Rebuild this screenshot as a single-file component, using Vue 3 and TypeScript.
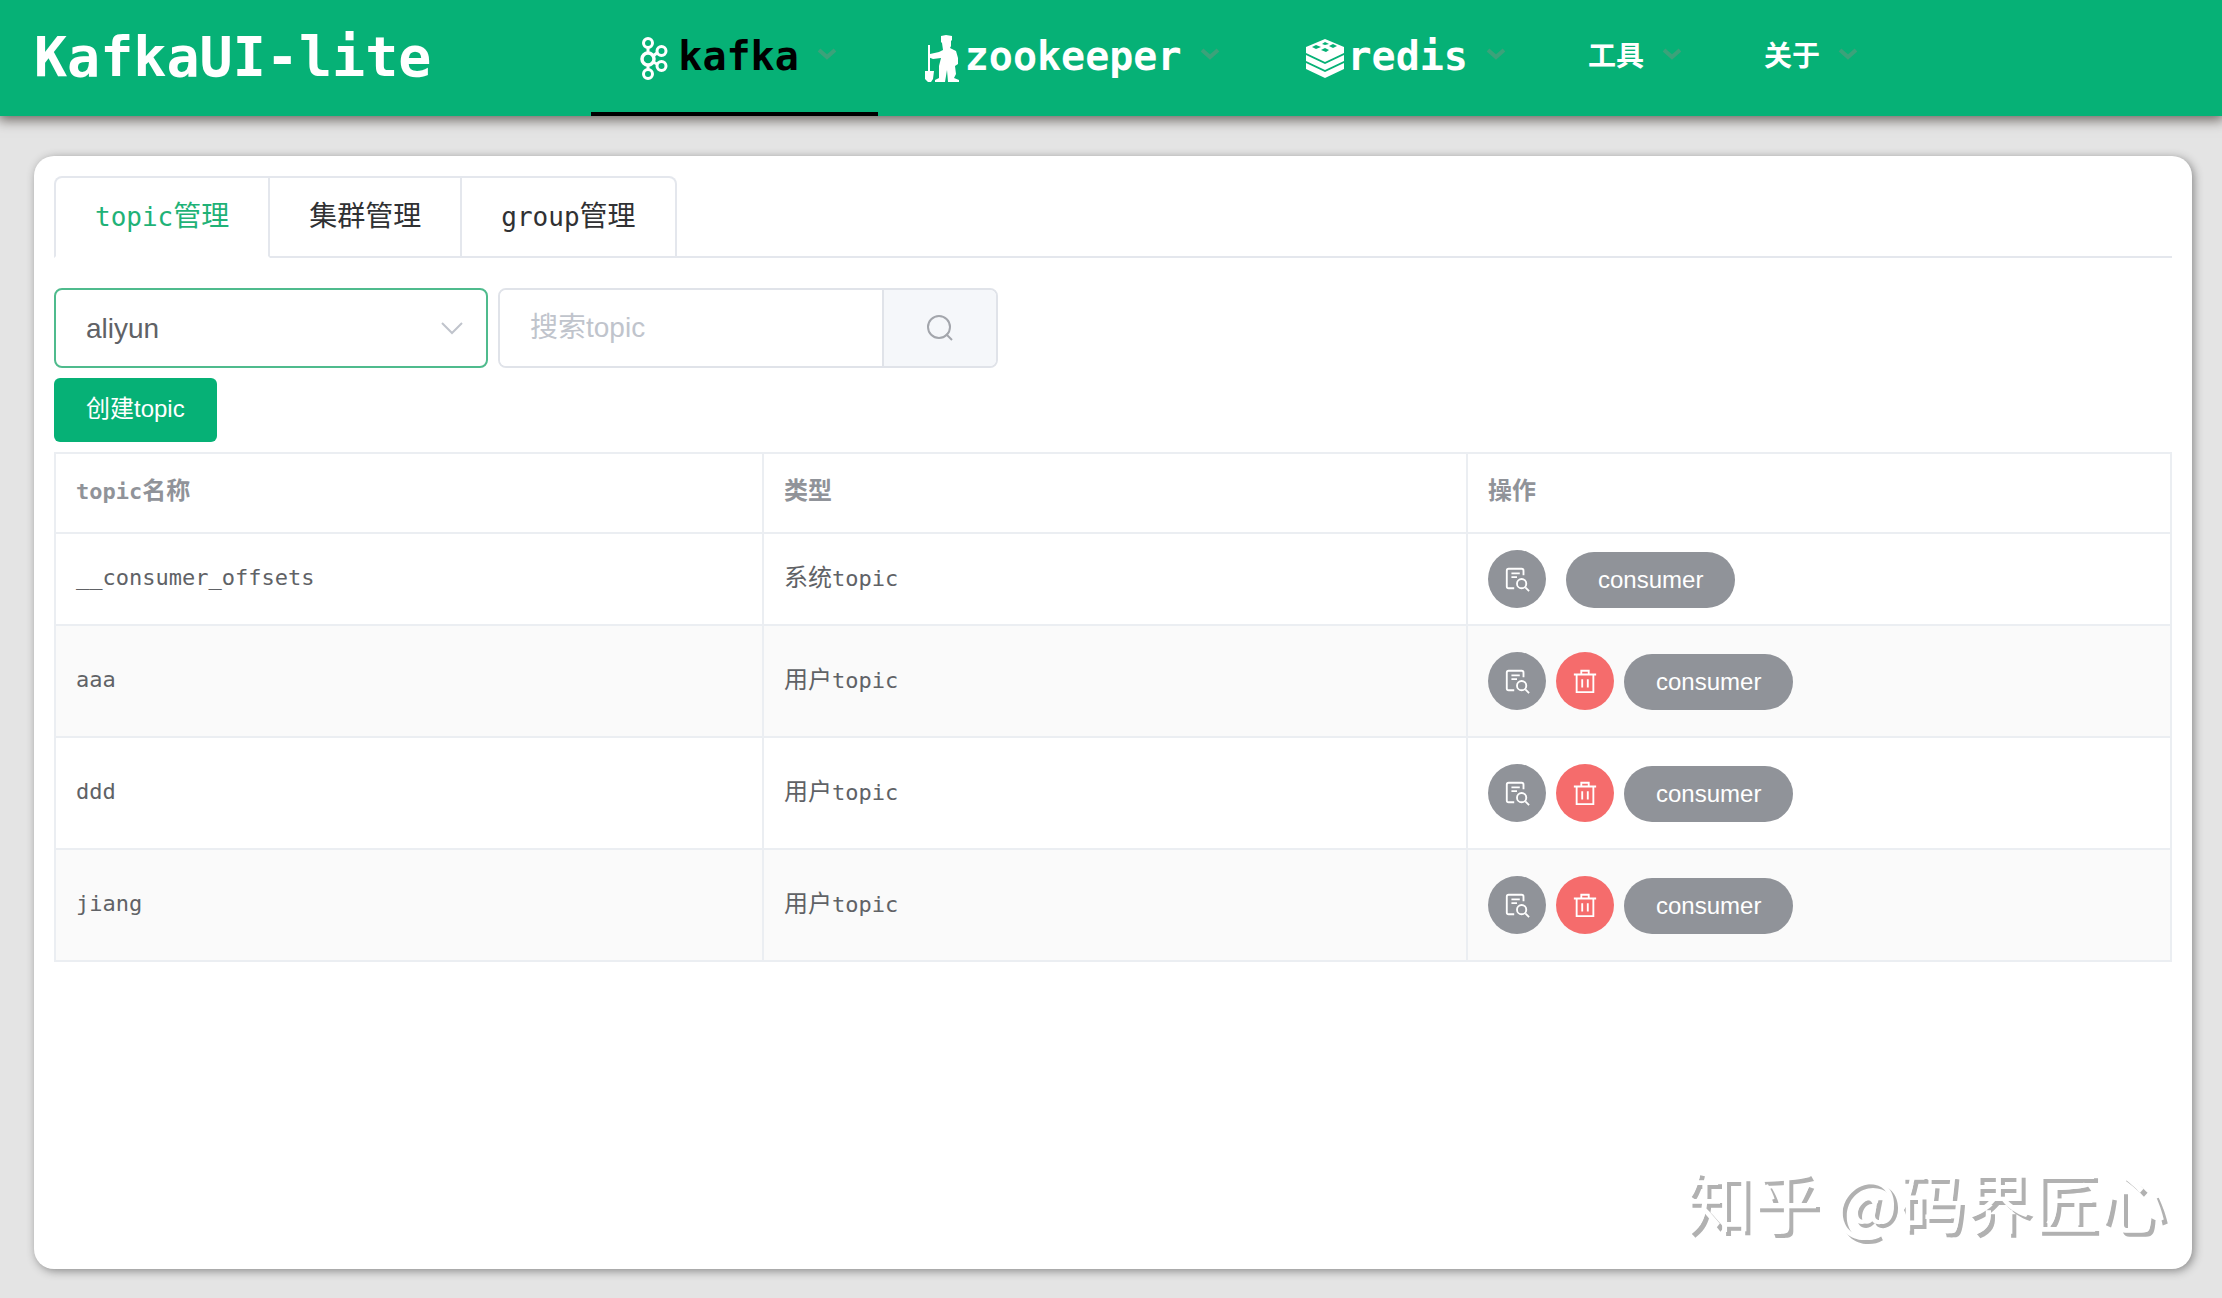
<script setup lang="ts">
import { ref } from 'vue'

interface Topic {
  name: string
  system: boolean
}

const cluster = ref('aliyun')
const keyword = ref('')

const topics: Topic[] = [
  { name: '__consumer_offsets', system: true },
  { name: 'aaa', system: false },
  { name: 'ddd', system: false },
  { name: 'jiang', system: false },
]
</script>

<template>
  <div class="page">
    <header class="topbar">
      <h1 class="brand">KafkaUI-lite</h1>
      <nav class="menu">
        <a href="#kafka" class="menu-item active">
          <svg class="logo" viewBox="0 0 46 48" fill="none" stroke="#fff" stroke-width="3">
            <circle cx="16" cy="9" r="4.5" />
            <circle cx="16" cy="25" r="6" stroke-width="3.5" />
            <circle cx="16" cy="40" r="4.5" />
            <circle cx="29.5" cy="17" r="4.5" />
            <circle cx="29.5" cy="32" r="4.5" />
            <path d="M16 13v6M16 31v5M21 22l4-3M21 28l4 2" />
          </svg>
          <span>kafka</span>
          <svg class="caret" viewBox="0 0 20 12"><path d="M2 2l8 7 8-7" /></svg>
        </a>
        <a href="#zookeeper" class="menu-item">
          <svg class="logo" viewBox="0 0 46 48" fill="#fff">
            <path d="M22 2l5-1 6 1v4l-1 1v5l-1 2 6 3 2 7 0 6-3 2 1 8-2 4 5 2v2H29l-1-12-2 12h-10v-2l4-2v-12l2-8-8 1-5-2v-7h2v4l9-2 4-2-1-7-1-1z" />
            <path d="M9 11h2v26h4l-1 8-2 3H9l-3-3V37h3z" />
          </svg>
          <span>zookeeper</span>
          <svg class="caret" viewBox="0 0 20 12"><path d="M2 2l8 7 8-7" /></svg>
        </a>
        <a href="#redis" class="menu-item">
          <svg class="logo" viewBox="0 0 46 48" fill="#fff">
            <path fill-rule="evenodd" d="M23 5l19 8v6L23 28 4 19v-6zM23 8l-3 2 3 1 4-1zM14 11l-4 2 4 2 5-2zM31 10l-4 2 4 2 4-2zM23 14l-4 2 5 2 3-2z" />
            <path d="M4 21l19 9 19-9v6L23 36 4 27zM4 29l19 9 19-9v6L23 44 4 35z" />
          </svg>
          <span>redis</span>
          <svg class="caret" viewBox="0 0 20 12"><path d="M2 2l8 7 8-7" /></svg>
        </a>
        <a href="#tools" class="menu-item">
          <span class="menu-zh">工具</span>
          <svg class="caret" viewBox="0 0 20 12"><path d="M2 2l8 7 8-7" /></svg>
        </a>
        <a href="#about" class="menu-item">
          <span class="menu-zh">关于</span>
          <svg class="caret" viewBox="0 0 20 12"><path d="M2 2l8 7 8-7" /></svg>
        </a>
      </nav>
    </header>

    <main class="card">
      <div class="tabs" role="tablist">
        <button type="button" role="tab" aria-selected="true" class="tab active">topic<span class="zh">管理</span></button>
        <button type="button" role="tab" aria-selected="false" class="tab"><span class="zh">集群管理</span></button>
        <button type="button" role="tab" aria-selected="false" class="tab">group<span class="zh">管理</span></button>
      </div>

      <div class="filters">
        <div class="picker">
          <select v-model="cluster" aria-label="集群">
            <option value="aliyun">aliyun</option>
          </select>
          <svg class="picker-caret" viewBox="0 0 24 14"><path d="M2 2l10 10L22 2" /></svg>
        </div>
        <form class="search" @submit.prevent>
          <input v-model="keyword" type="text" placeholder="搜索topic" aria-label="搜索topic" />
          <button type="submit" aria-label="搜索">
            <svg viewBox="0 0 28 28"><circle cx="13" cy="13" r="11" /><path d="M20 20l6 6" /></svg>
          </button>
        </form>
      </div>

      <button type="button" class="create">创建topic</button>

      <table class="topics">
        <colgroup>
          <col class="col-name" />
          <col />
          <col />
        </colgroup>
        <thead>
          <tr>
            <th scope="col">topic<span class="zh">名称</span></th>
            <th scope="col"><span class="zh">类型</span></th>
            <th scope="col"><span class="zh">操作</span></th>
          </tr>
        </thead>
        <tbody>
          <tr v-for="topic in topics" :key="topic.name" :class="{ system: topic.system }">
            <td>{{ topic.name }}</td>
            <td><span class="zh">{{ topic.system ? '系统' : '用户' }}</span>topic</td>
            <td class="ops">
              <div class="actions">
                <button type="button" class="round" aria-label="查看">
                  <svg viewBox="0 0 28 28">
                    <path d="M11 24H5a2 2 0 0 1-2-2V5a2 2 0 0 1 2-2h14a2 2 0 0 1 2 2v5M8 8h9M8 12h6" />
                    <circle cx="19" cy="19" r="5" />
                    <path d="M23 23l4 4" />
                  </svg>
                </button>
                <button v-if="!topic.system" type="button" class="round danger" aria-label="删除">
                  <svg viewBox="0 0 28 28">
                    <path d="M2 7h24M10 6V3h8v3M5 7v19h18V7M11 12v9M17 12v9" />
                  </svg>
                </button>
                <button type="button" class="pill">consumer</button>
              </div>
            </td>
          </tr>
        </tbody>
      </table>

      <div class="watermark">知乎 @码界匠心</div>
    </main>
  </div>
</template>

<style>
body {
  margin: 0;
  background: #e4e4e4;
}
</style>

<style scoped>
.page {
  display: flex;
  flex-direction: column;
  min-height: 100vh;
  font-family: "DejaVu Sans Mono", "Noto Sans CJK SC", monospace;
  font-size: 22px;
  color: #606266;
}

.page *,
.page {
  box-sizing: border-box;
}

button,
select,
input {
  margin: 0;
  font-family: "Liberation Sans", "Noto Sans CJK SC", sans-serif;
}

button {
  cursor: pointer;
}

.topbar {
  display: flex;
  align-items: stretch;
  height: 116px;
  padding-left: 34px;
  background: #06b176;
  box-shadow: 0 2px 12px 2px #6b6560;
}

.brand {
  margin: 0 160px 0 0;
  font-size: 55px;
  line-height: 114px;
  color: #fff;
}

.menu {
  display: flex;
}

.menu-item {
  display: flex;
  align-items: center;
  padding: 0 41px;
  border-bottom: 4px solid transparent;
  font-size: 40px;
  font-weight: bold;
  line-height: 112px;
  color: #fff;
  text-decoration: none;
}

.menu-item.active {
  border-bottom-color: #000;
  color: #000;
}

.menu-zh {
  padding-top: 2px;
  font-size: 28px;
}

.logo {
  width: 46px;
  height: 48px;
  margin-top: 4px;
}

.caret {
  width: 20px;
  height: 12px;
  margin: 0 0 4px 18px;
  fill: none;
  stroke: #3ba27a;
  stroke-width: 4;
}

.card {
  position: relative;
  flex: 1;
  margin: 40px 30px 29px 34px;
  padding: 20px;
  border-radius: 20px;
  background: #fff;
  box-shadow: 2px 2px 10px #888;
}

.tabs {
  display: flex;
  height: 82px;
  border-bottom: 2px solid #e4e7ed;
}

.tab {
  height: 82px;
  padding: 0 39px;
  border: 2px solid #e4e7ed;
  border-left-width: 0;
  background: #fff;
  font-family: "DejaVu Sans Mono", "Noto Sans CJK SC", monospace;
  font-size: 26px;
  line-height: 76px;
  color: #303133;
}

.tab .zh {
  font-size: 28px;
}

.tab:first-child {
  border-left-width: 2px;
  border-top-left-radius: 8px;
}

.tab:last-child {
  border-top-right-radius: 8px;
}

.tab.active {
  border-bottom-color: #fff;
  color: #1fb277;
}

.filters {
  display: flex;
  gap: 10px;
  margin-top: 30px;
}

.picker {
  position: relative;
  width: 434px;
}

.picker select {
  width: 100%;
  height: 80px;
  padding: 0 30px;
  border: 2px solid #4fbb8d;
  border-radius: 8px;
  outline: none;
  appearance: none;
  background: #fff;
  font-size: 28px;
  color: #606266;
}

.picker-caret {
  position: absolute;
  top: 33px;
  right: 24px;
  width: 24px;
  height: 14px;
  fill: none;
  stroke: #c0c4cc;
  stroke-width: 2;
  pointer-events: none;
}

.search {
  display: flex;
  width: 500px;
  height: 80px;
  border: 2px solid #e0e3e9;
  border-radius: 8px;
  overflow: hidden;
}

.search input {
  flex: 1;
  min-width: 0;
  padding: 0 30px;
  border: 0;
  outline: none;
  background: #fff;
  font-size: 28px;
  color: #606266;
}

.search input::placeholder {
  color: #c0c4cc;
  opacity: 1;
}

.search button {
  display: grid;
  place-items: center;
  width: 114px;
  padding: 0;
  border: 0;
  border-left: 2px solid #e0e3e9;
  background: #f5f7fa;
}

.search svg {
  width: 28px;
  height: 28px;
  fill: none;
  stroke: #a3a6ac;
  stroke-width: 2;
}

.create {
  display: block;
  height: 64px;
  margin: 10px 0;
  padding: 0 32px 2px;
  border: 0;
  border-radius: 6px;
  background: #06b176;
  font-size: 24px;
  line-height: 62px;
  color: #fff;
}

.topics {
  width: 100%;
  table-layout: fixed;
  border-collapse: collapse;
}

.col-name {
  width: 708px;
}

.topics th,
.topics td {
  padding: 0 20px;
  border: 2px solid #ebeef2;
  line-height: 24px;
  text-align: left;
}

.topics th {
  height: 80px;
  padding-bottom: 4px;
  color: #909399;
}

.topics td {
  height: 112px;
  padding-bottom: 2px;
}

.topics .ops {
  padding-bottom: 0;
}

.topics .system td {
  height: 92px;
}

.topics tbody tr:nth-child(even) {
  background: #fafafa;
}

.topics .zh {
  font-size: 24px;
}

.actions {
  display: flex;
  align-items: flex-end;
  gap: 10px;
}

.system .actions {
  gap: 20px;
}

.round,
.pill {
  border: 0;
  background: #909399;
  color: #fff;
}

.round {
  display: grid;
  place-items: center;
  width: 58px;
  height: 58px;
  padding: 0;
  border-radius: 50%;
}

.round.danger {
  background: #f56c6c;
}

.round svg {
  width: 26px;
  height: 26px;
  fill: none;
  stroke: #fff;
  stroke-width: 2;
}

.pill {
  height: 56px;
  padding: 0 32px;
  border-radius: 28px;
  font-size: 24px;
}

.watermark {
  position: absolute;
  right: 26px;
  bottom: 22px;
  font-family: "Noto Sans CJK SC", sans-serif;
  font-size: 67px;
  line-height: 96px;
  color: #fff;
  text-shadow: 4px 4px 0 #b1b1b1;
}
</style>
